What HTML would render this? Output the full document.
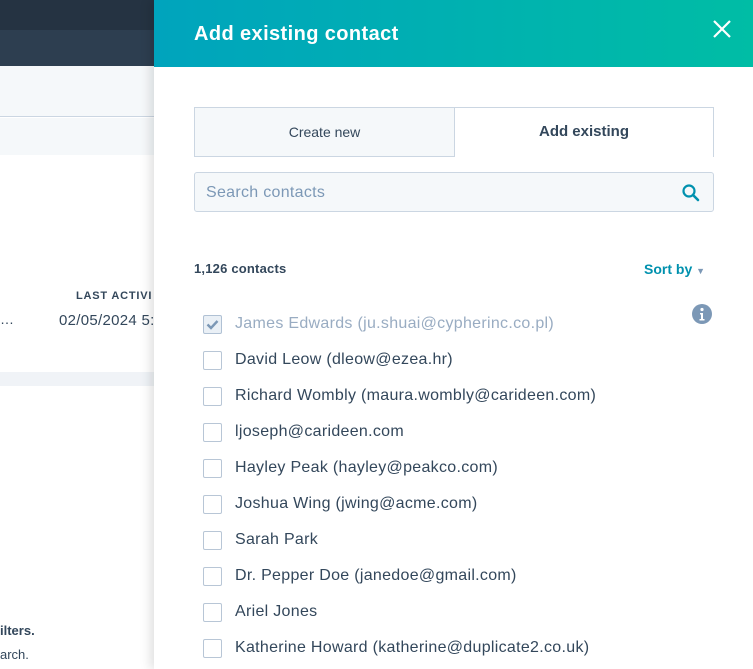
<!DOCTYPE html>
<html><head><style>
*{box-sizing:border-box;margin:0;padding:0}
body{width:753px;height:669px;overflow:hidden;position:relative;font-family:"Liberation Sans",sans-serif;background:#fff;color:#33475b}
.l{position:absolute;left:0;width:154px}
.panel{position:absolute;left:154px;top:0;width:599px;height:669px;background:#fff;box-shadow:-4px 0 10px rgba(0,0,0,.12)}
.hdr{height:67px;background:linear-gradient(90deg,#00a4bd,#00bda5);color:#fff;font-weight:bold;font-size:20px;letter-spacing:.4px;padding:23px 0 0 40px;position:relative}
.x{position:absolute;right:22px;top:20px}
.tabs{position:absolute;left:40px;top:107px;width:520px;height:50px;display:flex}
.t1{width:261px;background:#f5f8fa;border:1px solid #cbd6e2;font-size:14px;text-align:center;line-height:48px;color:#33475b}
.t2{flex:1;border:1px solid #cbd6e2;border-left:none;border-bottom:none;text-align:center;line-height:48px;font-size:15px;color:#33475b;font-weight:bold}
.search{position:absolute;left:40px;top:172px;width:520px;height:40px;background:#f5f8fa;border:1px solid #cbd6e2;border-radius:3px;font-size:16px;letter-spacing:.3px;color:#7c98b6;padding:11px 11px}
.cnt{position:absolute;left:40px;top:261px;font-size:13px;font-weight:bold;color:#33475b;letter-spacing:.2px}
.sort{position:absolute;left:490px;top:261px;font-size:14px;font-weight:bold;color:#0091ae}
.row{position:absolute;left:49px;height:20px;font-size:16px;letter-spacing:.3px;color:#33475b;display:flex;align-items:center;white-space:nowrap}
.cb{width:19px;height:19px;border:1px solid #b8c6d6;border-radius:2px;margin-right:13px;background:#fff;flex:none}
</style></head><body>
<div class="l" style="top:0;height:30px;background:#253342"></div>
<div class="l" style="top:30px;height:36px;background:#2d3e50"></div>
<div class="l" style="top:66px;height:51px;background:#f5f8fa;border-bottom:1px solid #cbd6e2"></div>
<div class="l" style="top:118px;height:37px;background:#f5f8fa"></div>
<div style="position:absolute;left:76px;top:290px;font-size:11px;font-weight:bold;color:#33475b;letter-spacing:.8px">LAST ACTIVI</div>
<div style="position:absolute;left:0;top:311px;font-size:14px;color:#33475b">…</div>
<div style="position:absolute;left:59px;top:312px;font-size:15px;color:#33475b;white-space:nowrap;letter-spacing:.3px">02/05/2024 5:</div>
<div class="l" style="top:372px;height:14px;background:#f0f3f7"></div>
<div style="position:absolute;left:0;top:623px;font-size:13px;font-weight:bold">ilters.</div>
<div style="position:absolute;left:0;top:647px;font-size:13px">arch.</div>
<div class="panel">
<div class="hdr">Add existing contact
<svg class="x" width="18" height="18" viewBox="0 0 18 18"><path d="M1 1L17 17M17 1L1 17" stroke="#fff" stroke-width="2.2"/></svg></div>
<div class="tabs"><div class="t1">Create new</div><div class="t2">Add existing</div></div>
<div class="search">Search contacts
<svg style="position:absolute;right:13px;top:11px" width="18" height="18" viewBox="0 0 18 18"><circle cx="7" cy="7" r="5.5" fill="none" stroke="#0091ae" stroke-width="2.2"/><path d="M11 11L16 16" stroke="#0091ae" stroke-width="2.6" stroke-linecap="round"/></svg></div>
<div class="cnt">1,126 contacts</div>
<div class="sort">Sort by <span style="font-size:9px;color:#7c98b6">▼</span></div>
<svg style="position:absolute;left:538px;top:304px" width="20" height="20" viewBox="0 0 20 20"><circle cx="10" cy="10" r="10" fill="#7c98b6"/><circle cx="10" cy="5.5" r="1.6" fill="#fff"/><path d="M8 9h3v6h1.5v1.5h-5V15H9v-4.5H8z" fill="#fff"/></svg>
<div class="row" style="top:314px;color:#99acc2"><div class="cb" style="background:#eaf0f6;border-color:#b0c1d4;position:relative"><svg width="17" height="17" viewBox="0 0 17 17" style="position:absolute;left:0;top:0"><path d="M3.5 8.5l3.5 3.5 6.5-7" stroke="#7c98b6" stroke-width="2.4" fill="none"/></svg></div>James Edwards (ju.shuai@cypherinc.co.pl)</div>
<div class="row" style="top:350px"><div class="cb"></div>David Leow (dleow@ezea.hr)</div>
<div class="row" style="top:386px"><div class="cb"></div>Richard Wombly (maura.wombly@carideen.com)</div>
<div class="row" style="top:422px"><div class="cb"></div>ljoseph@carideen.com</div>
<div class="row" style="top:458px"><div class="cb"></div>Hayley Peak (hayley@peakco.com)</div>
<div class="row" style="top:494px"><div class="cb"></div>Joshua Wing (jwing@acme.com)</div>
<div class="row" style="top:530px"><div class="cb"></div>Sarah Park</div>
<div class="row" style="top:566px"><div class="cb"></div>Dr. Pepper Doe (janedoe@gmail.com)</div>
<div class="row" style="top:602px"><div class="cb"></div>Ariel Jones</div>
<div class="row" style="top:638px"><div class="cb"></div>Katherine Howard (katherine@duplicate2.co.uk)</div>
</div>
</body></html>
